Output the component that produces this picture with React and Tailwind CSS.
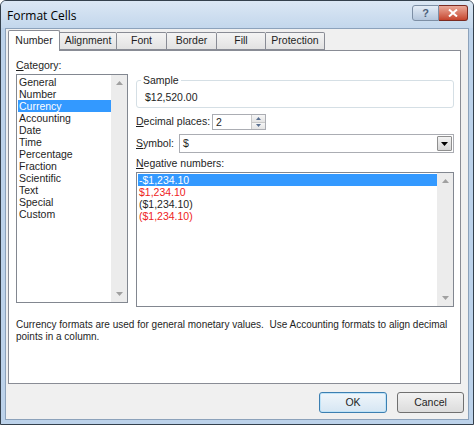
import React from "react";

const F = { fontFamily: '"Liberation Sans", Arial, sans-serif' };

function UpArrow() {
  return (
    <svg width="7" height="4" viewBox="0 0 7 4"><path d="M0 4 L3.5 0 L7 4 Z" fill="#a0a0a0" /></svg>
  );
}
function DownArrow({ c = "#a0a0a0", w = 7, h = 4 }) {
  return (
    <svg width={w} height={h} viewBox="0 0 7 4"><path d="M0 0 L7 0 L3.5 4 Z" fill={c} /></svg>
  );
}

function ScrollBar() {
  return (
    <div className="w-[16px] h-full bg-[#ececec] flex flex-col items-center justify-between py-[6px]">
      <UpArrow />
      <DownArrow />
    </div>
  );
}

const categories = ["General", "Number", "Currency", "Accounting", "Date", "Time", "Percentage", "Fraction", "Scientific", "Text", "Special", "Custom"];

export default function App() {
  return (
    <div className="w-[474px] h-[425px] overflow-hidden bg-white">
      <div
        className="w-[474px] h-[425px] flex flex-col rounded-t-[6px] border border-[#34404c] bg-[#bcd2ea] text-[10.5px] text-[#1e1e1e]"
        style={F}
      >
        {/* Title bar */}
        <div className="h-[27px] shrink-0 flex items-start bg-gradient-to-b from-[#dbe7f4] to-[#c3d7ec] rounded-t-[5px]">
          <div className="pl-[6px] pt-[6px] text-[12px] text-black" style={{ fontFamily: '"Open Sans", "Noto Sans", sans-serif' }}>
            Format Cells
          </div>
          <div className="ml-auto mt-[4px] mr-[5px] flex">
            <div className="w-[27px] h-[16px] rounded-l-[3px] border border-[#7d8fa5] bg-gradient-to-b from-[#e4edf7] to-[#b4c6dc] flex items-center justify-center text-[11px] font-bold text-[#4d5f7a]">
              ?
            </div>
            <div className="w-[29px] h-[16px] rounded-r-[3px] border border-[#7a2b22] border-l-0 bg-gradient-to-b from-[#e9a99a] to-[#c5432c] flex items-center justify-center">
              <svg width="10" height="8" viewBox="0 0 10 8">
                <path d="M1 0.5 L9 7.5 M9 0.5 L1 7.5" stroke="white" strokeWidth="2" />
              </svg>
            </div>
          </div>
        </div>

        {/* Client */}
        <div className="flex-1 mx-[4px] mb-[4px] bg-[#f0f0f0] border border-[#8ca2bb] flex flex-col">
          {/* Tabs */}
          <div className="ml-[2px] mt-[1px] h-[20px] flex items-end relative z-10">
            <div className="w-[52px] h-[21px] bg-white border border-[#898c95] border-b-0 rounded-t-[2px] flex items-center justify-center pb-[1px] -mb-[1px]">
              Number
            </div>
            {["Alignment", "Font", "Border", "Fill", "Protection"].map((t, i) => (
              <div
                key={t}
                className={
                  "h-[18px] bg-gradient-to-b from-[#f4f4f4] to-[#e2e2e2] border border-[#898c95] border-l-0 rounded-tr-[2px] flex items-center justify-center " +
                  ["w-[57px]", "w-[50px]", "w-[50px]", "w-[49px]", "w-[59px]"][i]
                }
              >
                {t}
              </div>
            ))}
          </div>

          {/* Panel */}
          <div className="ml-[2px] w-[453px] h-[334px] bg-white border border-[#898c95] pl-[7px] pt-[7px] flex flex-col">
            <div className="h-[14px] leading-[14px]">
              <span className="underline">C</span>ategory:
            </div>
            <div className="flex gap-[8px] mt-[2px]">
              {/* Category list */}
              <div className="w-[112px] h-[229px] border border-[#828790] flex">
                <div className="flex-1 pt-[1px] pl-[1px]">
                  {categories.map((c) => (
                    <div
                      key={c}
                      className={
                        "h-[12px] leading-[12px] pl-[1px] " + (c === "Currency" ? "bg-[#3399ff] text-white" : "")
                      }
                    >
                      {c}
                    </div>
                  ))}
                </div>
                <ScrollBar />
              </div>

              {/* Right side */}
              <div className="w-[318px] flex flex-col">
                <div className="mt-[6px] h-[28px] border border-[#d5dfe5] rounded-[3px] relative pl-[8px] pt-[10px]">
                  <div className="absolute -top-[8px] left-[4px] bg-white px-[2px] leading-[14px]">Sample</div>
                  <div className="leading-[12px]">$12,520.00</div>
                </div>

                <div className="mt-[6px] h-[16px] flex items-center">
                  <div className="w-[76px] whitespace-nowrap">
                    <span className="underline">D</span>ecimal places:
                  </div>
                  <div className="w-[54px] h-[16px] border border-[#abadb3] flex">
                    <div className="flex-1 pl-[3px] leading-[14px]">2</div>
                    <div className="w-[14px] flex flex-col border-l border-[#c8c8c8]">
                      <div className="flex-1 bg-gradient-to-b from-[#f6f6f6] to-[#e4e4e4] border-b border-[#c8c8c8] flex items-center justify-center">
                        <svg width="5" height="3" viewBox="0 0 5 3"><path d="M0 3 L2.5 0 L5 3 Z" fill="#5a7090" /></svg>
                      </div>
                      <div className="flex-1 bg-gradient-to-b from-[#f6f6f6] to-[#e4e4e4] flex items-center justify-center">
                        <svg width="5" height="3" viewBox="0 0 5 3"><path d="M0 0 L5 0 L2.5 3 Z" fill="#5a7090" /></svg>
                      </div>
                    </div>
                  </div>
                </div>

                <div className="mt-[4px] h-[19px] flex items-center">
                  <div className="w-[43px] whitespace-nowrap">
                    <span className="underline">S</span>ymbol:
                  </div>
                  <div className="w-[275px] h-[19px] border border-[#abadb3] flex">
                    <div className="flex-1 pl-[3px] leading-[17px]">$</div>
                    <div className="w-[15px] my-[1px] mr-[1px] border border-[#8f8f8f] rounded-[1px] bg-gradient-to-b from-[#f3f3f3] to-[#d6d6d6] flex items-center justify-center">
                      <DownArrow c="#000" w={7} h={4} />
                    </div>
                  </div>
                </div>

                <div className="mt-[3px] h-[14px] leading-[14px]">
                  <span className="underline">N</span>egative numbers:
                </div>

                <div className="mt-[2px] w-[318px] h-[135px] border border-[#828790] flex">
                  <div className="flex-1 pt-[1px] pl-[1px]">
                    <div className="h-[12px] leading-[12px] pl-[1px] bg-[#3399ff] text-white">-$1,234.10</div>
                    <div className="h-[12px] leading-[12px] pl-[1px] text-[#ee1c1c]">$1,234.10</div>
                    <div className="h-[12px] leading-[12px] pl-[1px]">($1,234.10)</div>
                    <div className="h-[12px] leading-[12px] pl-[1px] text-[#ee1c1c]">($1,234.10)</div>
                  </div>
                  <ScrollBar />
                </div>
              </div>
            </div>

            <div className="mt-[12px] leading-[12px] w-[440px] text-[10px]">
              Currency formats are used for general monetary values.&nbsp; Use Accounting formats to align decimal points in a column.
            </div>
          </div>

          {/* Buttons */}
          <div className="mt-[8px] flex justify-end gap-[10px] mr-[4px]">
            <div className="w-[68px] h-[21px] rounded-[3px] border border-[#3c7fb1] bg-gradient-to-b from-[#f0f6fb] to-[#d6e6f3] shadow-[inset_0_0_0_1px_#bfe3f8] flex items-center justify-center">
              OK
            </div>
            <div className="w-[67px] h-[21px] rounded-[3px] border border-[#707070] bg-gradient-to-b from-[#f2f2f2] to-[#dcdcdc] flex items-center justify-center">
              Cancel
            </div>
          </div>
        </div>
      </div>
    </div>
  );
}
